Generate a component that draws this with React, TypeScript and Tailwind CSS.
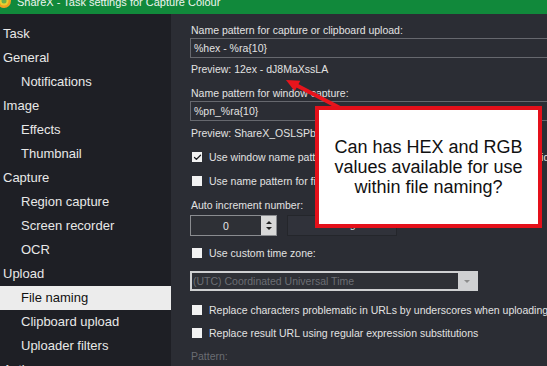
import { Check } from "lucide-react";

const navItems: { label: string; sub?: boolean; active?: boolean }[] = [
  { label: "Task" },
  { label: "General" },
  { label: "Notifications", sub: true },
  { label: "Image" },
  { label: "Effects", sub: true },
  { label: "Thumbnail", sub: true },
  { label: "Capture" },
  { label: "Region capture", sub: true },
  { label: "Screen recorder", sub: true },
  { label: "OCR", sub: true },
  { label: "Upload" },
  { label: "File naming", sub: true, active: true },
  { label: "Clipboard upload", sub: true },
  { label: "Uploader filters", sub: true },
  { label: "Actions" },
];

function CheckBox({ checked = false }: { checked?: boolean }) {
  return (
    <div className="w-[10px] h-[10px] bg-[#f2f2f2] flex items-center justify-center shrink-0">
      {checked && <Check className="w-[9px] h-[9px] text-[#1b1c20]" strokeWidth={3.5} />}
    </div>
  );
}

function CheckRow({ label, checked, className = "" }: { label: string; checked?: boolean; className?: string }) {
  return (
    <div className={`flex items-center h-[14px] pl-[2px] gap-[7px] whitespace-nowrap ${className}`}>
      <CheckBox checked={checked} />
      <span>{label}</span>
    </div>
  );
}

export default function App() {
  return (
    <div
      className="relative w-[547px] h-[366px] overflow-hidden bg-[#1e1f25] flex flex-col"
      style={{ fontFamily: '"Liberation Sans", Arial, sans-serif' }}>
      {/* Title bar */}
      <div className="h-[14px] bg-[#11893b] flex items-start overflow-hidden shrink-0">
        <svg width="12" height="10" viewBox="0 0 12 10" className="shrink-0">
          <circle cx="4" cy="1" r="7" fill="#f0a020" />
          <circle cx="4" cy="1" r="4.5" fill="#e8d030" />
          <circle cx="4" cy="1" r="2.5" fill="#6ab04c" />
        </svg>
        <span className="ml-[5px] -mt-[5px] text-[11px] leading-[14px] text-[#eef5ef] whitespace-nowrap">
          ShareX - Task settings for Capture Colour
        </span>
      </div>

      <div className="flex flex-1 min-h-0">
        {/* Sidebar */}
        <div className="w-[171px] shrink-0 bg-[#1e1f25] pt-[8px] text-[13px] text-[#e8e8e8]">
          {navItems.map(item => (
            <div
              key={item.label}
              className={`h-[24px] flex items-center whitespace-nowrap ${item.sub ? "pl-[21px]" : "pl-[3px]"} ${
                item.active ? "bg-[#ececec] text-[#111111]" : ""
              }`}>
              {item.label}
            </div>
          ))}
        </div>

        {/* Main panel */}
        <div className="flex-1 min-w-0 bg-[#2b2d34] pl-[19px] pt-[9px] text-[10.5px] leading-[14px] text-[#e2e2e2] overflow-hidden flex flex-col">
          <div className="h-[14px] pl-[1px] whitespace-nowrap">Name pattern for capture or clipboard upload:</div>
          <div className="mt-[1px] h-[20px] border border-[#66686e] flex items-center px-[3px] -mr-[20px]">
            %hex - %ra{"{10}"}
          </div>
          <div className="mt-[4px] h-[14px] pl-[1px] whitespace-nowrap">Preview: 12ex - dJ8MaXssLA</div>

          <div className="mt-[10px] h-[14px] pl-[1px] whitespace-nowrap">Name pattern for window capture:</div>
          <div className="mt-[1px] h-[20px] border border-[#66686e] flex items-center px-[3px] -mr-[20px]">
            %pn_%ra{"{10}"}
          </div>
          <div className="mt-[5px] h-[14px] pl-[1px] whitespace-nowrap">Preview: ShareX_OSLSPbQwRt</div>

          <CheckRow
            className="mt-[10px]"
            checked
            label="Use window name pattern for active window capture instead of the provided one"
          />
          <CheckRow className="mt-[10px]" label="Use name pattern for file name of window capture" />

          <div className="mt-[10px] h-[14px] pl-[1px] whitespace-nowrap">Auto increment number:</div>
          <div className="mt-[3px] h-[21px] flex items-stretch">
            <div className="w-[87px] flex border border-[#8a8c90]">
              <div className="flex-1 flex items-center justify-center bg-[#2e3036] text-[#e6e6e6]">0</div>
              <div className="w-[15px] bg-[#d8d8d8] flex flex-col items-center justify-center gap-[3px]">
                <div className="w-0 h-0 border-l-[3px] border-r-[3px] border-b-[3px] border-l-transparent border-r-transparent border-b-[#222]" />
                <div className="w-0 h-0 border-l-[3px] border-r-[3px] border-t-[3px] border-l-transparent border-r-transparent border-t-[#222]" />
              </div>
            </div>
            <div className="ml-[10px] w-[110px] bg-[#30323a] border border-[#24262b] flex items-center justify-center pb-[4px]">
              Settings
            </div>
          </div>

          <CheckRow className="mt-[10px]" label="Use custom time zone:" />
          <div className="mt-[11px] h-[20px] w-[288px] bg-[#cfd0d2] p-[2px] flex">
            <div className="flex-1 bg-[#2e3036] flex items-center px-[1px] text-[#6c6e74] whitespace-nowrap">
              (UTC) Coordinated Universal Time
            </div>
            <div className="w-[18px] flex items-center justify-center">
              <div className="w-0 h-0 border-l-[3px] border-r-[3px] border-t-[3px] border-l-transparent border-r-transparent border-t-[#8c8c8c]" />
            </div>
          </div>

          <CheckRow
            className="mt-[12px]"
            label="Replace characters problematic in URLs by underscores when uploading"
          />
          <CheckRow className="mt-[9px]" label="Replace result URL using regular expression substitutions" />
          <div className="mt-[9px] h-[14px] pl-[1px] text-[#6a6c72]">Pattern:</div>
        </div>
      </div>

      {/* Annotation arrow */}
      <svg className="absolute left-0 top-0 pointer-events-none" width="547" height="366">
        <line x1="340" y1="108" x2="294" y2="84" stroke="#e8141c" strokeWidth="4" />
        <polygon points="286,80 294.7,91.3 300.3,80.7" fill="#e8141c" />
      </svg>

      {/* Annotation callout */}
      <div className="absolute left-[315px] top-[106px] w-[227px] h-[122px] bg-white border-[4px] border-[#e4101a] flex items-center justify-center">
        <p className="text-[18px] leading-[20px] text-[#111111] text-center">
          Can has HEX and RGB
          <br />
          values available for use
          <br />
          within file naming?
        </p>
      </div>
    </div>
  );
}
